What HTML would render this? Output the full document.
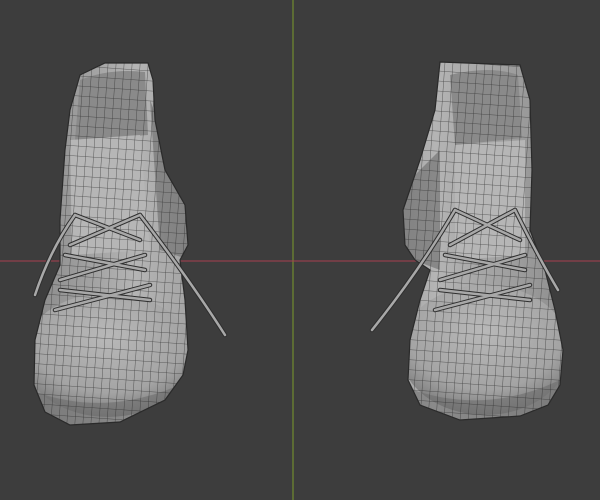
<!DOCTYPE html>
<html><head><style>
html,body{margin:0;padding:0;background:#3d3d3d;width:600px;height:500px;overflow:hidden}
</style></head><body>
<svg width="600" height="500" viewBox="0 0 600 500" xmlns="http://www.w3.org/2000/svg">
<defs>
<linearGradient id="g" x1="0" y1="0" x2="1" y2="0">
<stop offset="0" stop-color="#7c7c7c"/><stop offset="0.45" stop-color="#b4b4b4"/><stop offset="1" stop-color="#858585"/>
</linearGradient>
<radialGradient id="toe" cx="0.5" cy="0.35" r="0.65">
<stop offset="0" stop-color="#b8b8b8"/><stop offset="0.7" stop-color="#a4a4a4"/><stop offset="1" stop-color="#7a7a7a"/>
</radialGradient>
<pattern id="mesh" width="8" height="10" patternUnits="userSpaceOnUse" patternTransform="rotate(4)">
<path d="M0 0H8M0 0V10" stroke="#262626" stroke-width="0.8" fill="none" opacity="0.8"/>
</pattern>
<clipPath id="L"><path id="lp" d="M70 110L80 75L105 63L148 63L153 80L155 120L165 170L185 205L188 245L180 260L185 300L188 350L183 375L165 400L120 422L70 425L45 412L34 385L35 340L45 300L60 265L60 220L65 150Z"/></clipPath>
<clipPath id="R"><path id="rp" d="M440 62L520 65L530 100L532 170L530 230L545 270L555 310L563 350L560 385L548 405L520 416L460 420L420 405L408 380L410 340L420 300L430 270L415 260L405 245L403 210L420 160L435 110Z"/></clipPath>
</defs>
<line x1="293" y1="0" x2="293" y2="500" stroke="#7a9a2a" stroke-width="1"/>
<line x1="0" y1="261" x2="600" y2="261" stroke="#a8404f" stroke-width="1"/>
<g clip-path="url(#L)">
<rect x="0" y="0" width="300" height="500" fill="url(#g)"/>
<ellipse cx="108" cy="355" rx="85" ry="62" fill="url(#toe)"/>
<path d="M80 80Q110 68 145 72L148 135L75 140Z" fill="#8a8a8a"/>
<path d="M70 140L140 135L150 250L72 255Z" fill="#b6b6b6"/>
<path d="M150 100L190 200L190 260L160 250Z" fill="#6a6a6a" opacity="0.6"/>
<path d="M30 390Q110 420 190 380L190 440L30 440Z" fill="#6e6e6e" opacity="0.6"/>
<rect x="0" y="0" width="300" height="500" fill="url(#mesh)"/>
</g>
<use href="#lp" fill="none" stroke="#2a2a2a" stroke-width="1.2"/>
<g clip-path="url(#R)">
<rect x="300" y="0" width="300" height="500" fill="url(#g)"/>
<ellipse cx="485" cy="350" rx="85" ry="65" fill="url(#toe)"/>
<path d="M450 75Q490 65 518 75L522 138L455 145Z" fill="#8a8a8a"/>
<path d="M455 145L525 140L525 255L455 260Z" fill="#b6b6b6"/>
<path d="M400 190L440 150L440 270L400 255Z" fill="#6a6a6a" opacity="0.6"/>
<path d="M400 385Q485 420 570 375L570 440L400 440Z" fill="#6e6e6e" opacity="0.6"/>
<rect x="300" y="0" width="300" height="500" fill="url(#mesh)"/>
</g>
<use href="#rp" fill="none" stroke="#2a2a2a" stroke-width="1.2"/>
<g fill="none" stroke="#2e2e2e" stroke-width="4.5" stroke-linecap="round">
<path d="M75 215Q50 250 35 295M140 215Q190 280 225 335"/>
<path d="M75 215L140 240M140 215L70 245M65 255L145 270M145 255L60 280M60 290L150 300M150 285L55 310"/>
<path d="M455 210Q420 270 372 330M515 210Q540 260 558 290"/>
<path d="M455 210L520 240M515 210L450 245M445 255L525 270M525 255L440 280M440 290L530 300M530 285L435 310"/>
</g>
<g fill="none" stroke="#a8a8a8" stroke-width="2.5" stroke-linecap="round">
<path d="M75 215Q50 250 35 295M140 215Q190 280 225 335"/>
<path d="M75 215L140 240M140 215L70 245M65 255L145 270M145 255L60 280M60 290L150 300M150 285L55 310"/>
<path d="M455 210Q420 270 372 330M515 210Q540 260 558 290"/>
<path d="M455 210L520 240M515 210L450 245M445 255L525 270M525 255L440 280M440 290L530 300M530 285L435 310"/>
</g>
</svg>
</body></html>
